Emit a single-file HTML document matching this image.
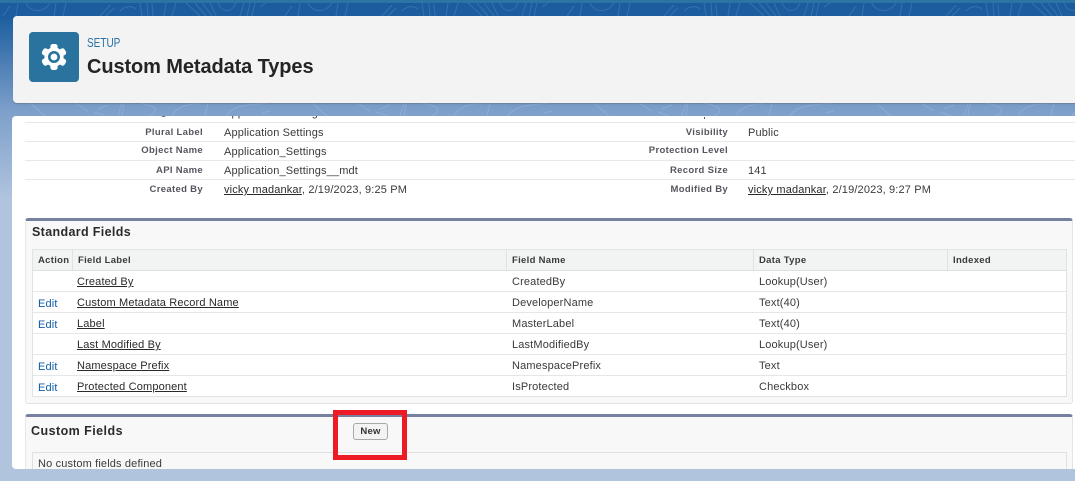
<!DOCTYPE html>
<html><head><meta charset="utf-8">
<style>
html,body{margin:0;padding:0}
body{width:1075px;height:481px;position:relative;overflow:hidden;background:#b0c4de;font-family:"Liberation Sans",Arial,sans-serif;color:#333;font-size:11px}
.a{position:absolute;white-space:nowrap}
.bg{position:absolute;left:0;top:0;width:1075px;height:220px;background:linear-gradient(#1b5c9f 0,#1c5d9f 16px,#7c9fca 110px,#b0c4de 200px)}
.l{position:absolute;left:25px;width:1050px;height:1px;background:#e6e8e9}
.k{position:absolute;text-align:right;font-weight:bold;color:#55555f;font-size:9.5px;letter-spacing:.33px;white-space:nowrap;line-height:12px}
.v{position:absolute;white-space:nowrap;line-height:12px;font-size:11px;letter-spacing:.15px;color:#3a3a3a}
.u{text-decoration:underline;color:#2a2a2a}
.sec{position:absolute;left:25px;width:1048px;background:#f8f8f8;border-top:3px solid #76809f;border-radius:3px 3px 0 0;box-sizing:border-box}
.t{position:absolute;font-weight:bold;font-size:9.5px;letter-spacing:.3px;color:#3a3a3a;line-height:12px;white-space:nowrap}
.c{position:absolute;line-height:12px;white-space:nowrap;font-size:11px;letter-spacing:.15px;color:#3a3a3a}
.e{color:#0f5ba7}
.r{position:absolute;left:33px;width:1034px;height:1px;background:#e4e6e8}
.vl{position:absolute;top:250px;width:1px;height:20px;background:#dfe1e2}
</style></head>
<body>
<div class="bg"></div>
<div class="a" style="left:0;top:0;width:1075px;height:3px;background:#2b74a3"></div>
<svg class="a" style="left:0;top:3px" width="1075" height="13">
<defs><pattern id="p1" width="282" height="13" patternUnits="userSpaceOnUse" x="100">
<path fill="none" stroke="#fff" stroke-opacity=".12" d="M0 13L10 2M6 13L14 5M20 8C26 2 32 3 36 6M40 0L42 13M47 0L48 13M52 1L53 13M66 0L64 13M76 0L72 13M86 0L100 13M95 0L106 13M102 0L112 13M110 0L116 13M118 0C122 10 132 10 136 0M140 13L144 0M147 13L150 0M152 13L155 0M160 4L166 0M185 13L192 3M200 0L198 13M208 0C212 10 226 10 232 0M238 0L236 13M248 0L245 13"/>
</pattern>
<pattern id="p2" width="282" height="13" patternUnits="userSpaceOnUse" x="0">
<path fill="none" stroke="#fff" stroke-opacity=".13" d="M30 0L45 13M75 0L88 8M94 9L105 13M108 2L98 6M122 0L118 13M124 0L122 13M140 0C160 4 158 8 150 13M172 13C176 4 190 0 200 1M205 13L208 0M226 13C232 2 250 2 268 0M270 8L262 10M284 0L282 13"/>
</pattern></defs>
<rect width="1075" height="13" fill="url(#p1)"/>
</svg>
<svg class="a" style="left:0;top:103px" width="1075" height="13">
<rect width="1075" height="13" fill="url(#p2)"/>
</svg>

<!-- header card -->
<div class="a" style="left:13px;top:16px;width:1070px;height:87px;background:#f3f3f3;border-radius:4px;box-shadow:0 1px 1px rgba(90,90,90,.4)"></div>
<div class="a" style="left:29px;top:32px;width:50px;height:50px;background:#2a739f;border-radius:4px"></div>
<svg class="a" style="left:40px;top:43px" width="28" height="28" viewBox="0 0 28 28">
<g fill="#fff">
<circle cx="14" cy="14" r="9.6"/>
<rect x="10.4" y="1" width="7.200" height="8" rx="2.400"/>
<rect x="10.4" y="19" width="7.200" height="8" rx="2.400"/>
<rect x="10.4" y="1" width="7.200" height="8" rx="2.400" transform="rotate(60 14 14)"/>
<rect x="10.4" y="1" width="7.200" height="8" rx="2.400" transform="rotate(120 14 14)"/>
<rect x="10.4" y="1" width="7.200" height="8" rx="2.400" transform="rotate(240 14 14)"/>
<rect x="10.4" y="1" width="7.200" height="8" rx="2.400" transform="rotate(300 14 14)"/>
</g>
<circle cx="14" cy="14" r="4.700" fill="none" stroke="#2a739f" stroke-width="2.600"/>
</svg>
<div class="a" style="left:87px;top:36px;font-size:12.5px;line-height:14px;color:#2a73a5;transform:scaleX(.8);transform-origin:left top">SETUP</div>
<div class="a" style="left:87px;top:55px;font-size:20px;line-height:24px;font-weight:bold;color:#242424;letter-spacing:-.1px">Custom Metadata Types</div>

<!-- main panel -->
<div class="a" style="left:12px;top:116px;width:1075px;height:353px;background:#fff;border-radius:4px 0 0 4px;overflow:hidden"></div>

<!-- clipped row above the visible area -->
<div class="a" style="left:12px;top:116px;width:1063px;height:3px;overflow:hidden">
<div class="k" style="right:860px;top:-9px">Singular Label</div>
<div class="v" style="left:212px;top:-9px">Application Setting</div>
</div>
<div class="a" style="left:704px;top:117px;width:1px;height:2px;background:#555"></div>
<div class="l" style="top:122px"></div>
<div class="l" style="top:141px"></div>
<div class="l" style="top:160px"></div>
<div class="l" style="top:179px"></div>

<div class="k" style="right:872px;top:127px">Plural Label</div>
<div class="v" style="left:224px;top:127px">Application Settings</div>
<div class="k" style="right:872px;top:145px">Object Name</div>
<div class="v" style="left:224px;top:146px">Application_Settings</div>
<div class="k" style="right:872px;top:165px">API Name</div>
<div class="v" style="left:224px;top:165px">Application_Settings__mdt</div>
<div class="k" style="right:872px;top:184px">Created By</div>
<div class="v" style="left:224px;top:184px"><span class="u">vicky madankar</span>, 2/19/2023, 9:25 PM</div>

<div class="k" style="right:347px;top:127px">Visibility</div>
<div class="v" style="left:748px;top:127px">Public</div>
<div class="k" style="right:347px;top:145px">Protection Level</div>
<div class="k" style="right:347px;top:165px">Record Size</div>
<div class="v" style="left:748px;top:165px">141</div>
<div class="k" style="right:347px;top:184px">Modified By</div>
<div class="v" style="left:748px;top:184px"><span class="u">vicky madankar</span>, 2/19/2023, 9:27 PM</div>

<!-- Standard Fields -->
<div class="sec" style="top:218px;height:186px;border-bottom:1px solid #e3e3e3;border-right:1px solid #e3e3e3;border-left:1px solid #e8e8e8;border-radius:3px"></div>
<div class="a" style="left:32px;top:225px;font-size:12.5px;line-height:15px;font-weight:bold;color:#2a2a2a;letter-spacing:.35px">Standard Fields</div>
<div class="a" style="left:32px;top:249px;width:1035px;height:148px;background:#fff;border:1px solid #e0e3e5;box-sizing:border-box"></div>
<div class="a" style="left:33px;top:250px;width:1033px;height:20px;background:#f2f3f3"></div>
<div class="r" style="top:270px;background:#dcdfe1"></div>
<div class="r" style="top:291px"></div>
<div class="r" style="top:312px"></div>
<div class="r" style="top:333px"></div>
<div class="r" style="top:354px"></div>
<div class="r" style="top:375px"></div>
<div class="vl" style="left:72px"></div>
<div class="vl" style="left:506px"></div>
<div class="vl" style="left:753px"></div>
<div class="vl" style="left:947px"></div>

<div class="t" style="left:38px;top:255px">Action</div>
<div class="t" style="left:78px;top:255px">Field Label</div>
<div class="t" style="left:512px;top:255px">Field Name</div>
<div class="t" style="left:759px;top:255px">Data Type</div>
<div class="t" style="left:953px;top:255px">Indexed</div>

<div class="c" style="left:77px;top:276px"><span class="u">Created By</span></div>
<div class="c" style="left:512px;top:276px">CreatedBy</div>
<div class="c" style="left:759px;top:276px">Lookup(User)</div>

<div class="c e" style="left:38px;top:298px">Edit</div>
<div class="c" style="left:77px;top:297px"><span class="u">Custom Metadata Record Name</span></div>
<div class="c" style="left:512px;top:297px">DeveloperName</div>
<div class="c" style="left:759px;top:297px">Text(40)</div>

<div class="c e" style="left:38px;top:319px">Edit</div>
<div class="c" style="left:77px;top:318px"><span class="u">Label</span></div>
<div class="c" style="left:512px;top:318px">MasterLabel</div>
<div class="c" style="left:759px;top:318px">Text(40)</div>

<div class="c" style="left:77px;top:339px"><span class="u">Last Modified By</span></div>
<div class="c" style="left:512px;top:339px">LastModifiedBy</div>
<div class="c" style="left:759px;top:339px">Lookup(User)</div>

<div class="c e" style="left:38px;top:361px">Edit</div>
<div class="c" style="left:77px;top:360px"><span class="u">Namespace Prefix</span></div>
<div class="c" style="left:512px;top:360px">NamespacePrefix</div>
<div class="c" style="left:759px;top:360px">Text</div>

<div class="c e" style="left:38px;top:382px">Edit</div>
<div class="c" style="left:77px;top:381px"><span class="u">Protected Component</span></div>
<div class="c" style="left:512px;top:381px">IsProtected</div>
<div class="c" style="left:759px;top:381px">Checkbox</div>

<!-- Custom Fields -->
<div class="sec" style="top:414px;height:55px;border-left:1px solid #e8e8e8;border-right:1px solid #e3e3e3"></div>
<div class="a" style="left:31px;top:424px;font-size:12.5px;line-height:15px;font-weight:bold;color:#2a2a2a;letter-spacing:.45px">Custom Fields</div>
<div class="a" style="left:353px;top:423px;width:35px;height:17px;box-sizing:border-box;background:#f3f3f3;border:1px solid #a9a9a9;border-radius:3px;text-align:center;font-size:9.5px;letter-spacing:.2px;line-height:16px;font-weight:bold;color:#333">New</div>
<div class="a" style="left:32px;top:452px;width:1035px;height:17px;border:1px solid #e0e0e0;border-bottom:0;box-sizing:border-box"></div>
<div class="a" style="left:38px;top:458px;height:11px;overflow:hidden;line-height:12px;font-size:11px;letter-spacing:.15px;color:#3a3a3a">No custom fields defined</div>

<!-- red highlight -->
<div class="a" style="left:333px;top:410px;width:74px;height:50px;box-sizing:border-box;border:5px solid #ed1c24"></div>
</body></html>
